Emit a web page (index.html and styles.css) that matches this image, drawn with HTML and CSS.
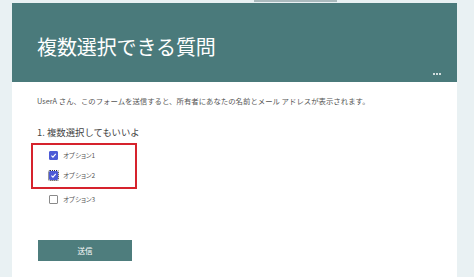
FILE: index.html
```html
<!DOCTYPE html>
<html lang="ja">
<head>
<meta charset="utf-8">
<link rel="stylesheet" href="styles.css">
</head>
<body>
<div class="topbar"><div class="seg"></div></div>
<div class="card">
  <div class="header">
    <div class="title">複数選択できる質問</div>
    <div class="more"><span></span><span></span><span></span></div>
  </div>
  <div class="content">
    <div class="notice">UserA さん、このフォームを送信すると、所有者にあなたの名前とメール アドレスが表示されます。</div>
    <div class="question">1. 複数選択してもいいよ</div>
    <div class="highlight">
      <div class="option"><span class="cb checked"><svg viewBox="0 0 10 10"><path d="M2 5.2 L4.2 7.3 L8.2 2.6" fill="none" stroke="#fff" stroke-width="1.6"/></svg></span><span class="label">オプション1</span></div>
      <div class="option"><span class="cb checked focus"><svg viewBox="0 0 10 10"><path d="M2 5.2 L4.2 7.3 L8.2 2.6" fill="none" stroke="#fff" stroke-width="1.6"/></svg></span><span class="label">オプション2</span></div>
    </div>
    <div class="option plain"><span class="cb"></span><span class="label">オプション3</span></div>
    <div class="submit">送信</div>
  </div>
</div>
</body>
</html>
```
FILE: styles.css
```css
html, body {
  margin: 0;
  padding: 0;
  background: #e9f1f3;
  font-family: "Noto Sans CJK JP", "Noto Sans", sans-serif;
  height: 277px;
  overflow: hidden;
}
.topbar {
  height: 3px;
  display: flex;
}
.seg {
  margin-left: 254px;
  width: 83px;
  height: 2px;
  background: #a9b9bc;
}
.card {
  margin-left: 12px;
  width: 445px;
  height: 274px;
  background: #fff;
}
.header {
  height: 79px;
  background: #4a7a7b;
  display: flex;
  flex-direction: column;
  justify-content: space-between;
  box-sizing: border-box;
  padding: 32px 16px 7px 25px;
}
.title {
  color: #fff;
  font-size: 20px;
  line-height: 24px;
  letter-spacing: -0.1px;
}
.more {
  display: flex;
  justify-content: flex-end;
  gap: 1px;
}
.more span {
  width: 2px;
  height: 2px;
  background: #fff;
  border-radius: 1px;
}
.content {
  padding-top: 14px;
}
.notice {
  margin-left: 25px;
  font-size: 7.4px;
  line-height: 9px;
  color: #555;
  white-space: nowrap;
}
.question {
  margin-left: 25px;
  margin-top: 21px;
  font-size: 9.4px;
  line-height: 12px;
  color: #444;
  white-space: nowrap;
}
.highlight {
  margin-left: 19px;
  margin-top: 5px;
  width: 106px;
  box-sizing: border-box;
  border: 2px solid #d6232d;
  padding: 0 0 2px 16px;
}
.option {
  height: 20px;
  display: flex;
  align-items: center;
  gap: 5px;
}
.option.plain {
  margin-left: 37px;
}
.cb {
  width: 9px;
  height: 9px;
  box-sizing: border-box;
  border: 1px solid #8a8a8a;
  border-radius: 1px;
  display: flex;
  background: #fff;
}
.cb.checked {
  background: #4d5bd6;
  border-color: #4d5bd6;
}
.cb.focus {
  outline: 1px dotted #333;
  outline-offset: 0px;
}
.cb svg {
  width: 100%;
  height: 100%;
}
.label {
  font-size: 6.5px;
  line-height: 9px;
  color: #555;
  font-feature-settings: "palt";
  white-space: nowrap;
}
.submit {
  margin-left: 26px;
  margin-top: 31px;
  width: 94px;
  height: 21px;
  background: #4e7d7d;
  color: #fff;
  font-size: 7.5px;
  display: flex;
  align-items: center;
  justify-content: center;
}
```
